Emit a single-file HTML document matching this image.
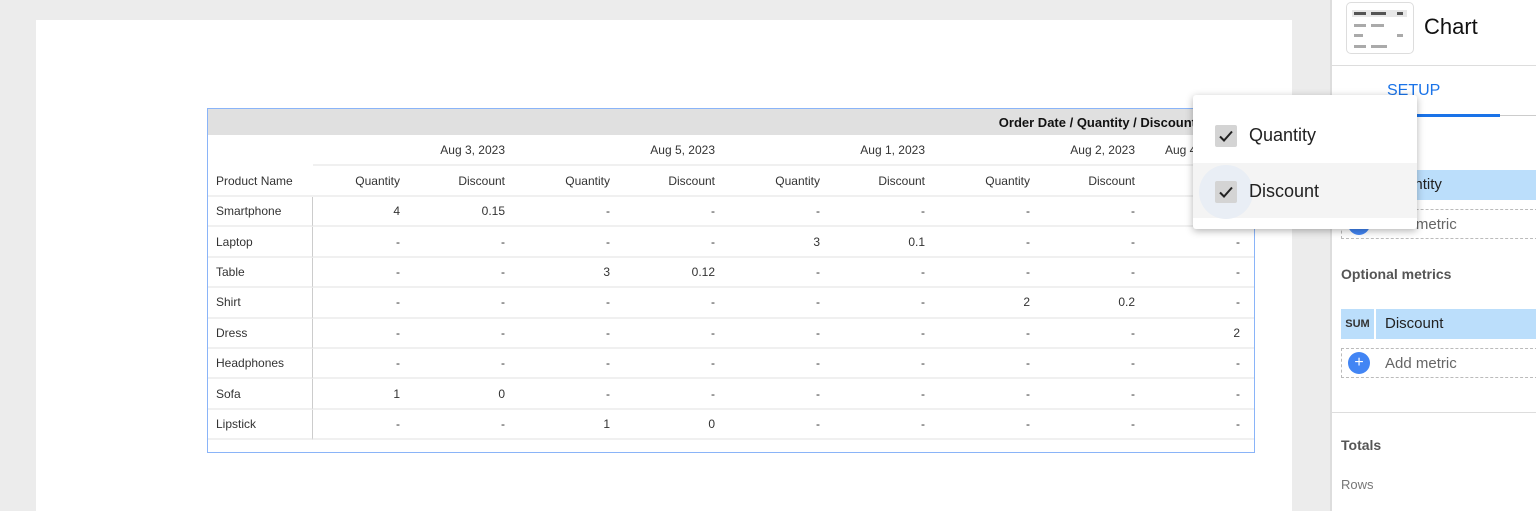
<!DOCTYPE html>
<html><head><style>
body{margin:0;width:1536px;height:511px;background:#ececec;font-family:"Liberation Sans",sans-serif;position:relative;overflow:hidden;color:#222}
.canvas{position:absolute;left:36px;top:20px;width:1256px;height:491px;background:#fff}
.box{position:absolute;left:207px;top:108px;width:1046px;height:343px;border:1px solid #8ab4f8;overflow:hidden;background:#fff}
.hb{height:26px;background:#e0e0e0;font-weight:bold;font-size:13px;line-height:28px;text-align:right;padding-right:58px;color:#111}
table{border-collapse:separate;border-spacing:0;table-layout:fixed;width:1050px;font-size:12px;color:#333}
td{height:28.4px;padding:0 18px 0 0;text-align:right;border-bottom:2px solid #ececec;box-shadow:inset -3px 0 0 #fff;white-space:nowrap;overflow:hidden}
td.n{text-align:left;padding-left:8px;border-right:1px solid #ccc;box-shadow:none}
tr.d td{height:29px;border-bottom:2px solid #f0f0f0}
tr.dr td{border-bottom:2px solid #f0f0f0}
.panel{position:absolute;left:1330px;top:0;width:206px;height:511px;background:#fff;border-left:2px solid #ddd}
.menu{position:absolute;left:1193px;top:95px;width:224px;height:134px;background:#fff;box-shadow:0 2px 8px rgba(0,0,0,.3);border-radius:3px;font-size:18px;color:#222}
.cb{position:absolute;left:22px;width:22px;height:22px;background:#d4d4d4;border-radius:2px}
.cb svg{position:absolute;left:2px;top:2px}
</style></head><body>
<div class="canvas"></div>
<div class="box">
<div class="hb">Order Date / Quantity / Discount</div>
<table>
<colgroup><col style="width:105px"><col span="9" style="width:105px"></colgroup>
<tr class="d"><td class="n" style="border-right:none;border-bottom-color:#fff"></td><td></td><td>Aug 3, 2023</td><td></td><td>Aug 5, 2023</td><td></td><td>Aug 1, 2023</td><td></td><td>Aug 2, 2023</td><td style="text-align:left;padding-left:12px">Aug 4, 2023</td></tr>
<tr class="d"><td class="n" style="border-right:none">Product Name</td><td>Quantity</td><td>Discount</td><td>Quantity</td><td>Discount</td><td>Quantity</td><td>Discount</td><td>Quantity</td><td>Discount</td><td>Quantity</td></tr>
<tr class="dr"><td class="n">Smartphone</td><td>4</td><td>0.15</td><td>-</td><td>-</td><td>-</td><td>-</td><td>-</td><td>-</td><td>-</td></tr>
<tr class="dr"><td class="n">Laptop</td><td>-</td><td>-</td><td>-</td><td>-</td><td>3</td><td>0.1</td><td>-</td><td>-</td><td>-</td></tr>
<tr class="dr"><td class="n">Table</td><td>-</td><td>-</td><td>3</td><td>0.12</td><td>-</td><td>-</td><td>-</td><td>-</td><td>-</td></tr>
<tr class="dr"><td class="n">Shirt</td><td>-</td><td>-</td><td>-</td><td>-</td><td>-</td><td>-</td><td>2</td><td>0.2</td><td>-</td></tr>
<tr class="dr"><td class="n">Dress</td><td>-</td><td>-</td><td>-</td><td>-</td><td>-</td><td>-</td><td>-</td><td>-</td><td>2</td></tr>
<tr class="dr"><td class="n">Headphones</td><td>-</td><td>-</td><td>-</td><td>-</td><td>-</td><td>-</td><td>-</td><td>-</td><td>-</td></tr>
<tr class="dr"><td class="n">Sofa</td><td>1</td><td>0</td><td>-</td><td>-</td><td>-</td><td>-</td><td>-</td><td>-</td><td>-</td></tr>
<tr class="dr"><td class="n">Lipstick</td><td>-</td><td>-</td><td>1</td><td>0</td><td>-</td><td>-</td><td>-</td><td>-</td><td>-</td></tr>
</table>
</div>
<div class="panel">
 <div style="position:absolute;left:14px;top:2px;width:66px;height:50px;border:1px solid #ddd;border-radius:5px;background:#fff">
  <div style="position:absolute;left:5px;top:7px;width:55px;height:7px;background:#e8e8e8"></div>
  <div style="position:absolute;left:7px;top:9px;width:12px;height:3px;background:#555"></div>
  <div style="position:absolute;left:24px;top:9px;width:15px;height:3px;background:#555"></div>
  <div style="position:absolute;left:50px;top:9px;width:6px;height:3px;background:#555"></div>
  <div style="position:absolute;left:7px;top:21px;width:12px;height:3px;background:#aaa"></div>
  <div style="position:absolute;left:24px;top:21px;width:13px;height:3px;background:#aaa"></div>
  <div style="position:absolute;left:7px;top:31px;width:9px;height:3px;background:#aaa"></div>
  <div style="position:absolute;left:50px;top:31px;width:6px;height:3px;background:#aaa"></div>
  <div style="position:absolute;left:7px;top:42px;width:12px;height:3px;background:#aaa"></div>
  <div style="position:absolute;left:24px;top:42px;width:16px;height:3px;background:#aaa"></div>
 </div>
 <div style="position:absolute;left:92px;top:14px;font-size:22px;color:#111">Chart</div>
 <div style="position:absolute;left:0;top:65px;width:206px;height:1px;background:#ddd"></div>
 <div style="position:absolute;left:55px;top:82px;font-size:16px;color:#1a73e8">SETUP</div>
 <div style="position:absolute;left:2px;top:114px;width:166px;height:3px;background:#1a73e8"></div>
 <div style="position:absolute;left:168px;top:115px;width:40px;height:1px;background:#ccc"></div>
 <div style="position:absolute;left:9px;top:170px;width:197px;height:30px;background:#bbdefb;font-size:15px;line-height:30px;padding-left:45px;box-sizing:border-box">Quantity</div>
 <div style="position:absolute;left:9px;top:209px;width:197px;height:30px;border:1px dashed #bbb;border-right:none;font-size:15px;line-height:30px;color:#666;padding-left:43px;box-sizing:border-box">Add metric</div>
 <div style="position:absolute;left:16px;top:213px;width:22px;height:22px;border-radius:50%;background:#4285f4"></div>
 <div style="position:absolute;left:9px;top:266px;font-size:14px;font-weight:bold;color:#555">Optional metrics</div>
 <div style="position:absolute;left:9px;top:309px;width:197px;height:30px;background:#bbdefb;font-size:15px;line-height:30px"><span style="position:absolute;left:0;width:33px;text-align:center;font-size:11px;font-weight:bold;color:#333;border-right:2px solid #fff">SUM</span><span style="position:absolute;left:44px">Discount</span></div>
 <div style="position:absolute;left:9px;top:348px;width:197px;height:30px;border:1px dashed #bbb;border-right:none;font-size:15px;line-height:30px;color:#666;padding-left:43px;box-sizing:border-box">Add metric</div>
 <div style="position:absolute;left:16px;top:352px;width:22px;height:22px;border-radius:50%;background:#4285f4;color:#fff;text-align:center;line-height:22px;font-size:16px">+</div>
 <div style="position:absolute;left:0;top:412px;width:206px;height:1px;background:#ddd"></div>
 <div style="position:absolute;left:9px;top:437px;font-size:14px;font-weight:bold;color:#555">Totals</div>
 <div style="position:absolute;left:9px;top:477px;font-size:13px;color:#777">Rows</div>
</div>
<div class="menu">
 <div class="cb" style="top:30px"><svg width="18" height="18" viewBox="0 0 18 18"><path d="M3 9.5l4 4 8-9" stroke="#222" stroke-width="2" fill="none"/></svg></div>
 <div style="position:absolute;left:56px;top:30px">Quantity</div>
 <div style="position:absolute;left:0;top:68px;width:224px;height:55px;background:#f4f4f4"></div>
 <div style="position:absolute;left:6px;top:70px;width:54px;height:54px;border-radius:50%;background:#e9eef5"></div>
 <div class="cb" style="top:86px"><svg width="18" height="18" viewBox="0 0 18 18"><path d="M3 9.5l4 4 8-9" stroke="#222" stroke-width="2" fill="none"/></svg></div>
 <div style="position:absolute;left:56px;top:86px">Discount</div>
</div>
</body></html>
